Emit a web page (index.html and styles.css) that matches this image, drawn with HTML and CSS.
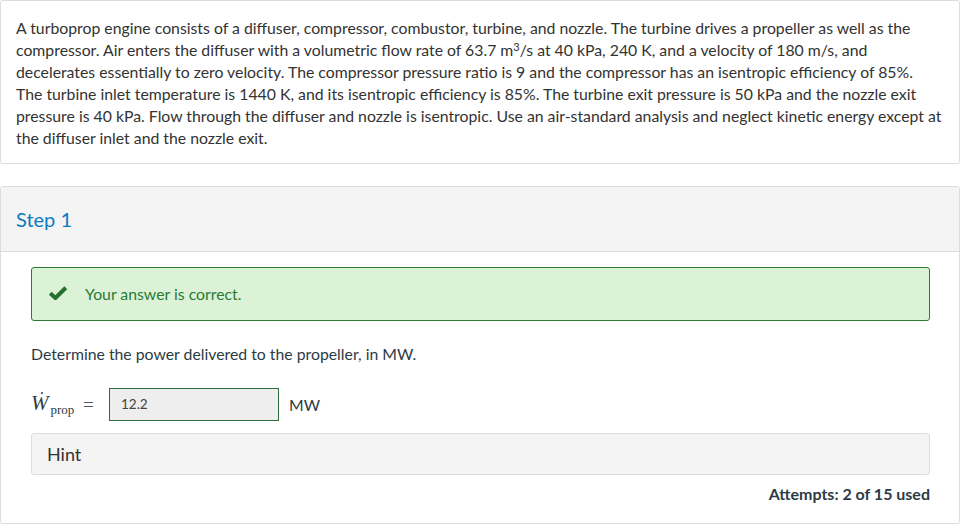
FILE: index.html
```html
<!DOCTYPE html>
<html>
<head>
<meta charset="utf-8">
<link rel="stylesheet" href="styles.css">
</head>
<body>
<div class="page">
  <div class="card question">
    <p>A turboprop engine consists of a diffuser, compressor, combustor, turbine, and nozzle. The turbine drives a propeller as well as the compressor. Air enters the diffuser with a volumetric flow rate of 63.7 m<sup>3</sup>/s at 40 kPa, 240 K, and a velocity of 180 m/s, and decelerates essentially to zero velocity. The compressor pressure ratio is 9 and the compressor has an isentropic efficiency of 85%. The turbine inlet temperature is 1440 K, and its isentropic efficiency is 85%. The turbine exit pressure is 50 kPa and the nozzle exit pressure is 40 kPa. Flow through the diffuser and nozzle is isentropic. Use an air-standard analysis and neglect kinetic energy except at the diffuser inlet and the nozzle exit.</p>
  </div>
  <div class="card step">
    <div class="step-head">Step 1</div>
    <div class="step-body">
      <div class="correct">
        <svg class="check" width="20" height="14" viewBox="0 0 20 14"><path d="M2.2 7.2 L7.4 12 L17.8 1.8" fill="none" stroke="#24712f" stroke-width="4" stroke-linejoin="miter"/></svg>
        <span>Your answer is correct.</span>
      </div>
      <p class="prompt">Determine the power delivered to the propeller, in MW.</p>
      <div class="answer-row">
        <span class="math"><span class="wdot">W</span><span class="sub">prop</span></span>
        <span class="eq">=</span>
        <div class="input">12.2</div>
        <span class="unit">MW</span>
      </div>
      <div class="hint">Hint</div>
      <div class="attempts">Attempts: 2 of 15 used</div>
    </div>
  </div>
</div>
</body>
</html>
```

FILE: styles.css
```css
html, body {
  margin: 0;
  padding: 0;
  background: #ffffff;
}
body {
  font-family: Lato, "Open Sans", sans-serif;
  font-size: 15.8px;
  line-height: 22px;
  color: #333333;
}
.page {
  width: 960px;
}
.card {
  border: 1px solid #dcdcdc;
  border-radius: 3px;
  background: #fff;
}
.question {
  padding: 16px 15px 14px 15px;
}
.question p {
  margin: 0;
  max-width: 926px;
}
sup {
  font-size: 11px;
  line-height: 0;
  vertical-align: 5px;
}
.step {
  margin-top: 22px;
}
.step-head {
  background: #f4f4f4;
  border-bottom: 1px solid #dcdcdc;
  height: 64px;
  display: flex;
  align-items: center;
  padding-left: 15px;
  font-size: 20px;
  color: #0b7bc0;
}
.step-body {
  padding: 15px 29px 18px 30px;
}
.correct {
  background: #dbf2d7;
  border: 1px solid #2a7c36;
  border-radius: 3px;
  height: 52px;
  display: flex;
  align-items: center;
  padding-left: 16px;
  color: #2a7a36;
}
.check {
  margin-right: 17px;
  margin-top: -2px;
}
.prompt {
  margin: 22px 0 0 0;
  color: #2d3b45;
}
.answer-row {
  margin-top: 23px;
  display: flex;
  align-items: center;
  height: 33px;
}
.math {
  font-family: "Liberation Serif", serif;
  display: inline-flex;
  align-items: baseline;
  width: 52px;
  color: #2d3b45;
}
.wdot {
  font-style: italic;
  font-size: 21px;
  position: relative;
}
.wdot::before {
  content: "";
  position: absolute;
  left: 10px;
  top: 0px;
  width: 2px;
  height: 2px;
  background: #2d3b45;
  border-radius: 1px;
}
.sub {
  font-size: 13px;
  margin-left: 2px;
  position: relative;
  top: 4px;
}
.eq {
  font-family: "Liberation Serif", serif;
  font-size: 19px;
  color: #555;
  width: 26px;
}
.input {
  width: 157px;
  height: 31px;
  border: 1px solid #2e6b3a;
  background: #eeeeee;
  font-size: 13.5px;
  line-height: 31px;
  padding-left: 11px;
  color: #444;
}
.unit {
  margin-left: 10px;
  color: #2d3b45;
}
.hint {
  margin-top: 12px;
  background: #f4f4f4;
  border: 1px solid #dcdcdc;
  border-radius: 3px;
  height: 40px;
  display: flex;
  align-items: center;
  padding-left: 15px;
  font-size: 18px;
  color: #333;
}
.attempts {
  margin-top: 8px;
  text-align: right;
  font-weight: bold;
  font-size: 16px;
  color: #2d3b45;
}
```
